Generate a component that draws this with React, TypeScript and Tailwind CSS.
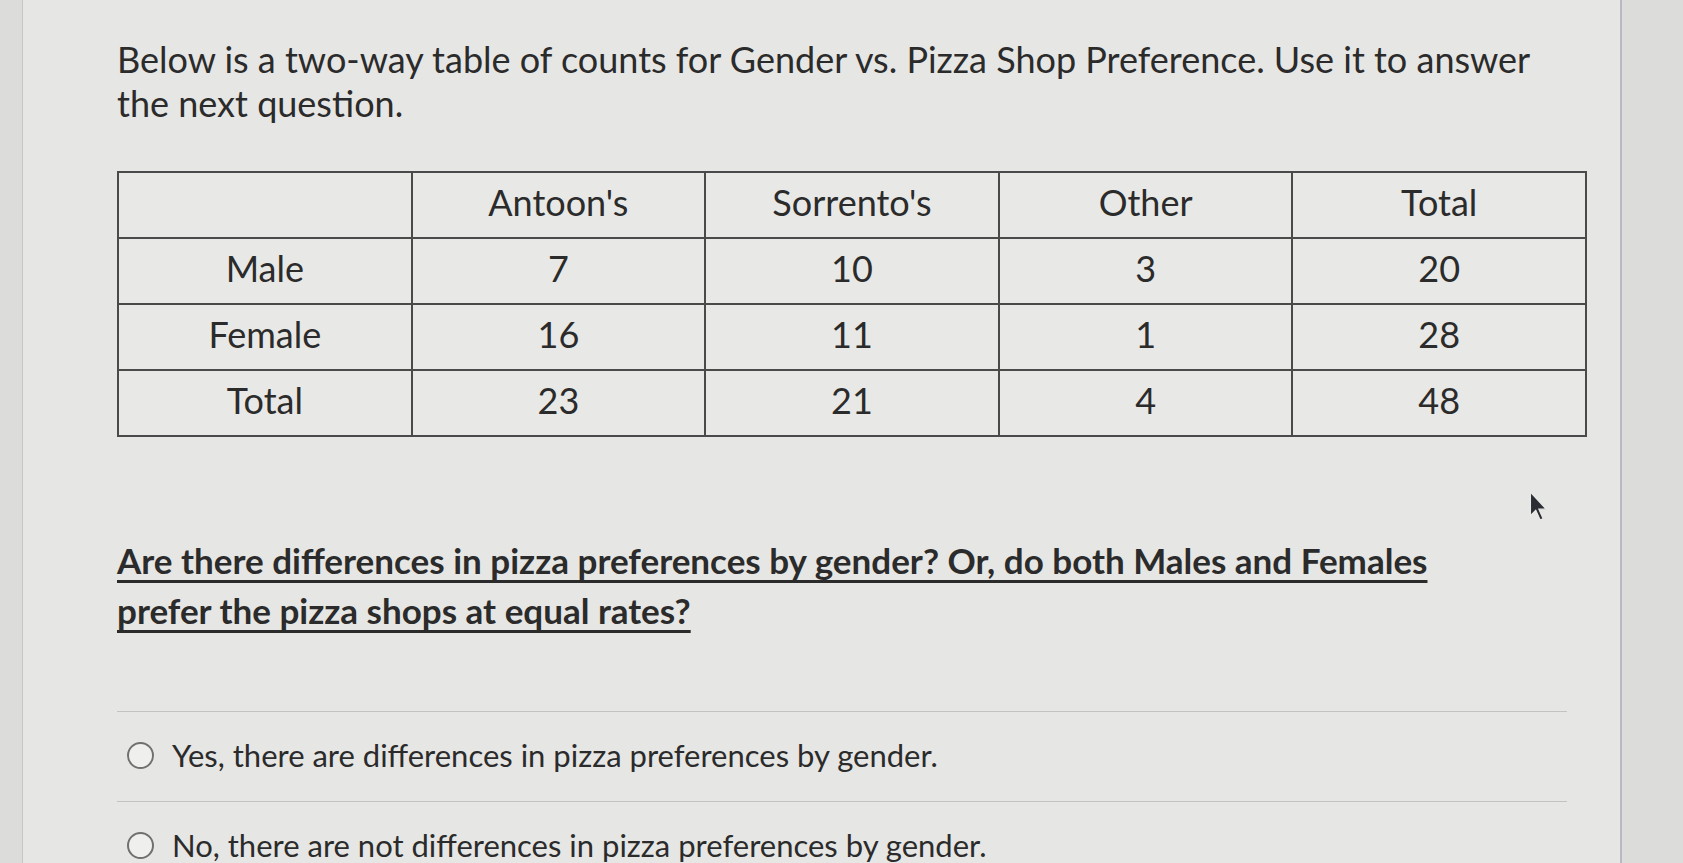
import React from 'react';

const HEADERS = ['', "Antoon's", "Sorrento's", 'Other', 'Total'];

const ROWS: string[][] = [
  ['Male', '7', '10', '3', '20'],
  ['Female', '16', '11', '1', '28'],
  ['Total', '23', '21', '4', '48'],
];

const OPTIONS = [
  'Yes, there are differences in pizza preferences by gender.',
  'No, there are not differences in pizza preferences by gender.',
];

function Cursor() {
  return (
    <svg width="24" height="32" viewBox="0 0 22 30" className="absolute left-[1528px] top-[490px]">
      <path d="M2 2 L2 24 L7 19 L11 28 L14 27 L10 18 L17 18 Z" fill="#2a2d33" stroke="#e8e8e6" strokeWidth="1.2" />
    </svg>
  );
}

export default function App() {
  return (
    <div className="relative h-[863px] w-[1683px] overflow-hidden bg-[#dcdddb] font-['Lato','Liberation_Sans',sans-serif] text-[#2b2b2b]">
      <div className="ml-[22px] h-full w-[1600px] border-l border-r-2 border-l-[#c6c7c5] border-r-[#b7bac2] bg-[#e6e6e4] pl-[94px] pr-[40px] pt-[37px]">
        {/* Intro */}
        <p className="w-[1450px] text-[36px] leading-[44px]">
          Below is a two-way table of counts for Gender vs. Pizza Shop Preference. Use it to answer the next question.
        </p>

        {/* Table */}
        <table className="mt-[46px] w-[1470px] table-fixed border-collapse border-2 border-[#4a4a4a] text-[36px]">
          <thead>
            <tr className="h-[66px]">
              {HEADERS.map((h, i) => (
                <th
                  key={i}
                  className="border-2 border-[#4a4a4a] bg-[#e8e8e6] pb-[6px] text-center font-normal"
                >
                  {h}
                </th>
              ))}
            </tr>
          </thead>
          <tbody>
            {ROWS.map((row) => (
              <tr key={row[0]} className="h-[66px]">
                {row.map((c, i) => (
                  <td key={i} className="border-2 border-[#4a4a4a] bg-[#e8e8e6] pb-[6px] text-center">
                    {c}
                  </td>
                ))}
              </tr>
            ))}
          </tbody>
        </table>

        {/* Question */}
        <p className="mt-[98px] w-[1400px] text-[35px] font-bold leading-[50px] underline decoration-[3px] underline-offset-[6px]">
          Are there differences in pizza preferences by gender? Or, do both Males and Females prefer the pizza shops at equal rates?
        </p>

        {/* Answers */}
        <div className="mt-[76px] w-[1450px]">
          {OPTIONS.map((o) => (
            <div key={o} className="flex h-[90px] items-start gap-[18px] border-t border-[#c3c4c2] pl-[10px] pt-[24px]">
              <span className="mt-[6px] h-[27px] w-[27px] shrink-0 rounded-full border-2 border-[#707070] bg-[#efefed]" />
              <span className="text-[31px] leading-[38px]">{o}</span>
            </div>
          ))}
        </div>
      </div>
      <Cursor />
    </div>
  );
}
